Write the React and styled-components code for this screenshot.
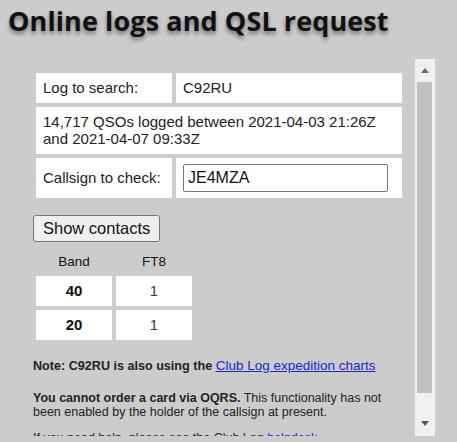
import React from 'react';
import styled, { createGlobalStyle } from 'styled-components';

const bands = [
  { band: '40', ft8: '1' },
  { band: '20', ft8: '1' },
];

function App() {
  return (
    <>
      <GlobalStyle />
      <Title>Online logs and QSL request</Title>
      <Scroller>
        <Content>
          <InfoTable>
            <tbody>
              <tr>
                <LabelCell>Log to search:</LabelCell>
                <Cell>C92RU</Cell>
              </tr>
              <tr>
                <Cell colSpan={2}>
                  14,717 QSOs logged between 2021-04-03 21:26Z and 2021-04-07 09:33Z
                </Cell>
              </tr>
              <tr>
                <LabelCell>Callsign to check:</LabelCell>
                <Cell>
                  <CallInput defaultValue="JE4MZA" />
                </Cell>
              </tr>
            </tbody>
          </InfoTable>
          <ShowButton type="button">Show contacts</ShowButton>
          <BandTable>
            <thead>
              <tr>
                <HeadCell>Band</HeadCell>
                <HeadCell>FT8</HeadCell>
              </tr>
            </thead>
            <tbody>
              {bands.map((row) => (
                <tr key={row.band}>
                  <BandCell $bold>{row.band}</BandCell>
                  <BandCell>{row.ft8}</BandCell>
                </tr>
              ))}
            </tbody>
          </BandTable>
          <Note>
            Note: C92RU is also using the <a href="#charts">Club Log expedition charts</a>
          </Note>
          <Text>
            <b>You cannot order a card via OQRS.</b> This functionality has not been
            enabled by the holder of the callsign at present.
          </Text>
          <Text>
            If you need help, please see the Club Log <a href="#help">helpdesk</a>.
          </Text>
        </Content>
        <ScrollBar>
          <ArrowButton $height={23}>
            <Arrow $up />
          </ArrowButton>
          <Thumb />
          <Track />
          <ArrowButton $height={26}>
            <Arrow />
          </ArrowButton>
        </ScrollBar>
      </Scroller>
    </>
  );
}

export default App;

// STYLES
const GlobalStyle = createGlobalStyle`
  html, body {
    margin: 0;
    background: #cccccc;
    font-family: "Liberation Sans", Arial, sans-serif;
    overflow: hidden;
  }
`;

const Title = styled.h1`
  margin: 2px 0 19px 8px;
  font-family: "Open Sans", "Liberation Sans", sans-serif;
  font-size: 27px;
  font-weight: 700;
  line-height: 38px;
  letter-spacing: 0.1px;
  color: #111;
  text-shadow: 0 3px 4px rgba(0, 0, 0, 0.45);
`;

const Scroller = styled.div`
  display: flex;
  margin-left: 24px;
  width: 411px;
  height: 377px;
`;

const Content = styled.div`
  flex: 1;
  overflow: hidden;
  padding: 10px 9px 0 8px;
`;

const ScrollBar = styled.div`
  width: 20px;
  flex: none;
  display: flex;
  flex-direction: column;
  background: #f0f0f0;
`;

const ArrowButton = styled.div`
  height: ${(props) => props.$height}px;
  flex: none;
  display: flex;
  align-items: center;
  justify-content: center;
  padding-right: 1px;
`;

const Arrow = styled.span`
  width: 0;
  height: 0;
  border-left: 4.5px solid transparent;
  border-right: 4.5px solid transparent;
  ${(props) =>
    props.$up ? 'border-bottom: 5px solid #6a6a6a;' : 'border-top: 5px solid #555;'}
`;

const Thumb = styled.div`
  height: 311px;
  margin: 0 3px 0 2px;
  background: #c1c1c1;
`;

const Track = styled.div`
  flex: 1;
`;

const InfoTable = styled.table`
  width: 100%;
  border-collapse: separate;
  border-spacing: 4px;
`;

const Cell = styled.td`
  background: #fff;
  padding: 6px 6px 6px 7px;
  font-size: 15px;
  line-height: 17.5px;
  color: #222;
  text-align: left;
`;

const LabelCell = styled(Cell)`
  width: 123px;
  white-space: nowrap;
`;

const CallInput = styled.input`
  box-sizing: border-box;
  width: 205px;
  height: 28px;
  padding: 1px 4px;
  font-family: "Liberation Sans", Arial, sans-serif;
  font-size: 16px;
  color: #111;
  border: 1px solid #767676;
  border-radius: 2px;
  background: #fff;
`;

const ShowButton = styled.button`
  display: block;
  margin: 13px 0 0 1px;
  height: 27px;
  padding: 1px 9px;
  font-family: "Liberation Sans", Arial, sans-serif;
  font-size: 16.5px;
  color: #111;
  background: #efefef;
  border: 1px solid #767676;
  border-radius: 3px;
`;

const BandTable = styled.table`
  margin-top: 5px;
  border-collapse: separate;
  border-spacing: 4px;
`;

const HeadCell = styled.th`
  padding: 3px 2px 2px;
  font-size: 13.5px;
  line-height: 16px;
  font-weight: 400;
  color: #111;
  text-align: center;
`;

const BandCell = styled.td`
  width: 64px;
  background: #fff;
  padding: 6px;
  font-size: 15px;
  line-height: 18px;
  text-align: center;
  font-weight: ${(props) => (props.$bold ? 700 : 400)};
  color: ${(props) => (props.$bold ? '#111' : '#3a3a3a')};
`;

const Note = styled.p`
  margin: 15px 0 18px 1px;
  font-size: 12.6px;
  line-height: 14px;
  font-weight: 700;
  color: #222;

  a {
    font-size: 13.5px;
    font-weight: 400;
    color: #2222cc;
  }
`;

const Text = styled.p`
  margin: 0 0 12px 1px;
  font-size: 12.5px;
  line-height: 14px;
  color: #222;

  a {
    color: #2222cc;
  }
`;
